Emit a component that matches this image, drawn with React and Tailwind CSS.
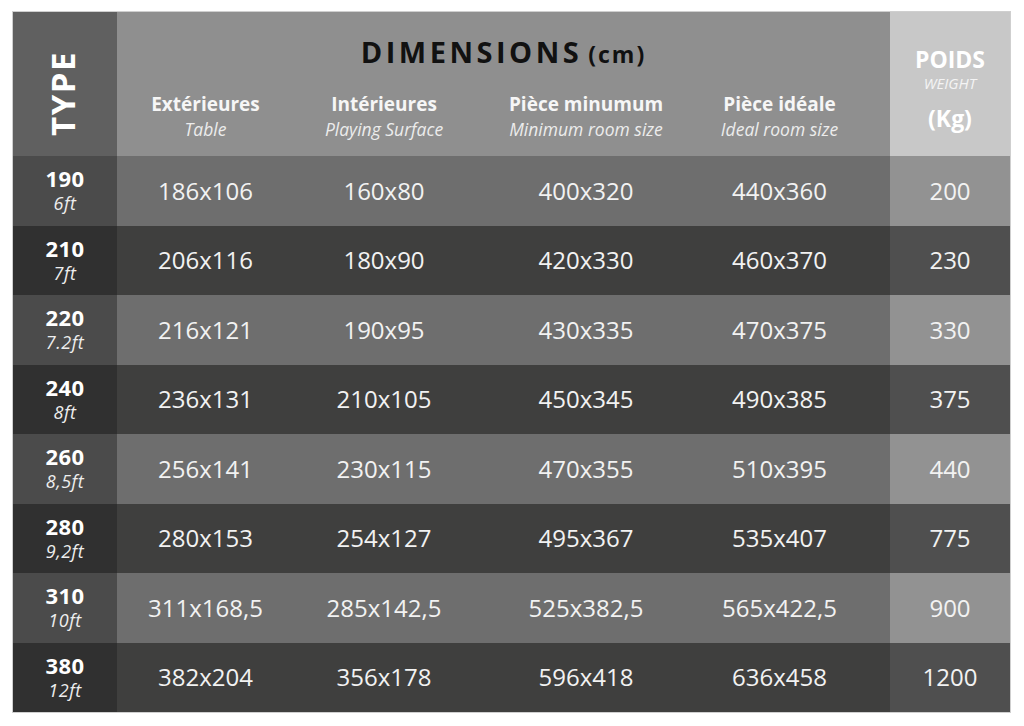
const rows = [
  { type: "190", ft: "6ft", ext: "186x106", int: "160x80", min: "400x320", ideal: "440x360", kg: "200" },
  { type: "210", ft: "7ft", ext: "206x116", int: "180x90", min: "420x330", ideal: "460x370", kg: "230" },
  { type: "220", ft: "7.2ft", ext: "216x121", int: "190x95", min: "430x335", ideal: "470x375", kg: "330" },
  { type: "240", ft: "8ft", ext: "236x131", int: "210x105", min: "450x345", ideal: "490x385", kg: "375" },
  { type: "260", ft: "8,5ft", ext: "256x141", int: "230x115", min: "470x355", ideal: "510x395", kg: "440" },
  { type: "280", ft: "9,2ft", ext: "280x153", int: "254x127", min: "495x367", ideal: "535x407", kg: "775" },
  { type: "310", ft: "10ft", ext: "311x168,5", int: "285x142,5", min: "525x382,5", ideal: "565x422,5", kg: "900" },
  { type: "380", ft: "12ft", ext: "382x204", int: "356x178", min: "596x418", ideal: "636x458", kg: "1200" },
];

const heads = [
  { fr: "Extérieures", en: "Table" },
  { fr: "Intérieures", en: "Playing Surface" },
  { fr: "Pièce minumum", en: "Minimum room size" },
  { fr: "Pièce idéale", en: "Ideal room size" },
];

const dimCols = "grid grid-cols-[177px_180px_224px_163px_29px]";

const App = () => {
  return (
    <div className="w-[1024px] h-[726px] bg-white pt-[11px] pl-[12px] font-['Open_Sans',sans-serif]">
      <div className="w-[999px] border border-[#cfcfcf]">
        {/* ---------- Header ---------- */}
        <div className="grid grid-cols-[104px_773px_120px] h-[144px]">
          <div className="bg-[#606060] flex items-center justify-center pt-[18px] pr-[6px]">
            <span className="-rotate-90 text-white font-bold text-[33px] tracking-[1.5px] leading-none">
              TYPE
            </span>
          </div>

          <div className="bg-[#8f8f8f] pt-[22px]">
            <div className="text-center h-[36px] leading-[36px] text-[#111]">
              <span className="font-bold text-[29px] tracking-[3.5px]">DIMENSIONS</span>
              <span className="font-bold text-[23px] tracking-[2px] ml-[6px]">(cm)</span>
            </div>
            <div className={`${dimCols} mt-[22px]`}>
              {heads.map((h) => (
                <div key={h.fr} className="text-center">
                  <div className="text-[19px] font-bold text-[#f6f6f6] leading-[24px]">{h.fr}</div>
                  <div className="text-[17.5px] italic text-[#ececec] leading-[26px]">{h.en}</div>
                </div>
              ))}
            </div>
          </div>

          <div className="bg-[#c8c8c8] flex flex-col items-center pt-[33px] text-white">
            <div className="text-[23px] font-bold leading-[28px]">POIDS</div>
            <div className="text-[15px] italic leading-[20px] text-[#f4f4f4]">WEIGHT</div>
            <div className="text-[23px] font-bold leading-[28px] mt-[11px]">(Kg)</div>
          </div>
        </div>

        {/* ---------- Rows ---------- */}
        {rows.map((r, i) => {
          const light = i % 2 === 0;
          return (
            <div key={r.type} className="grid grid-cols-[104px_773px_120px] h-[69.5px] text-[#f2f2f2]">
              <div
                className={`${light ? "bg-[#4b4b4b]" : "bg-[#303030]"} flex flex-col items-center justify-center`}
              >
                <div className="text-[22px] font-bold leading-[25px] tracking-[0.5px] text-white">{r.type}</div>
                <div className="text-[18px] italic leading-[24px] tracking-[0.5px] text-[#eeeeee]">{r.ft}</div>
              </div>
              <div className={`${light ? "bg-[#6e6e6e]" : "bg-[#3f3f3e]"} ${dimCols} items-center text-[24px]`}>
                <div className="text-center">{r.ext}</div>
                <div className="text-center">{r.int}</div>
                <div className="text-center">{r.min}</div>
                <div className="text-center">{r.ideal}</div>
                <div />
              </div>
              <div
                className={`${light ? "bg-[#929292]" : "bg-[#4f4f4f]"} flex items-center justify-center text-[24px]`}
              >
                {r.kg}
              </div>
            </div>
          );
        })}
      </div>
    </div>
  );
};

export default App;
